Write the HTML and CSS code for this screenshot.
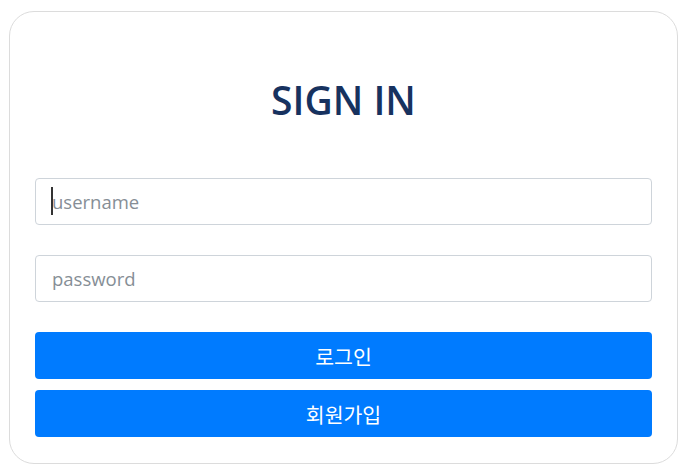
FILE: index.html
```html
<!DOCTYPE html>
<html lang="ko">
<head>
<meta charset="utf-8">
<title>Sign in</title>
<link rel="stylesheet" href="styles.css">
</head>
<body>
<div class="page">
  <div class="card">
    <h1 class="title">SIGN IN</h1>
    <form class="form">
      <div class="field">
        <input class="input" type="text" placeholder="username">
        <span class="caret"></span>
      </div>
      <div class="field field-last">
        <input class="input" type="password" placeholder="password">
      </div>
      <button class="btn" type="button">로그인</button>
      <button class="btn" type="button">회원가입</button>
    </form>
  </div>
</div>
</body>
</html>
```
FILE: styles.css
```css
* { box-sizing: border-box; }
html, body { margin: 0; padding: 0; background: #ffffff; }
body { font-family: "Open Sans", "Noto Sans CJK KR", sans-serif; }
.page { padding: 11px 10px 11px 9px; }
.card {
  border: 1px solid #dcdcdc;
  border-radius: 25px;
  padding: 25px 25px 26px;
  background: #fff;
}
.title {
  margin: 39px 0 54px;
  font-size: 39px;
  line-height: 48px;
  font-weight: 600;
  color: #17325f;
  text-align: center;
}
.form { display: flex; flex-direction: column; }
.field { position: relative; margin-bottom: 30px; }
.field-last { margin-bottom: 30px; }
.input {
  display: block;
  width: 100%;
  height: 47px;
  border: 1px solid #ced4da;
  border-radius: 4px;
  padding: 0 16px;
  font-family: "Open Sans", sans-serif;
  font-size: 18.5px;
  color: #495057;
  outline: none;
  background: #fff;
}
.input::placeholder { color: #868e96; }
.caret {
  position: absolute;
  left: 16px;
  top: 9px;
  width: 2px;
  height: 28px;
  background: #333;
}
.btn {
  display: block;
  width: 100%;
  height: 47px;
  border: none;
  border-radius: 4px;
  background: #007bff;
  color: #fff;
  font-family: "Noto Sans CJK KR", "Open Sans", sans-serif;
  font-size: 20.5px;
  margin-bottom: 11px;
  cursor: pointer;
}
.btn:last-child { margin-bottom: 0; }
```
